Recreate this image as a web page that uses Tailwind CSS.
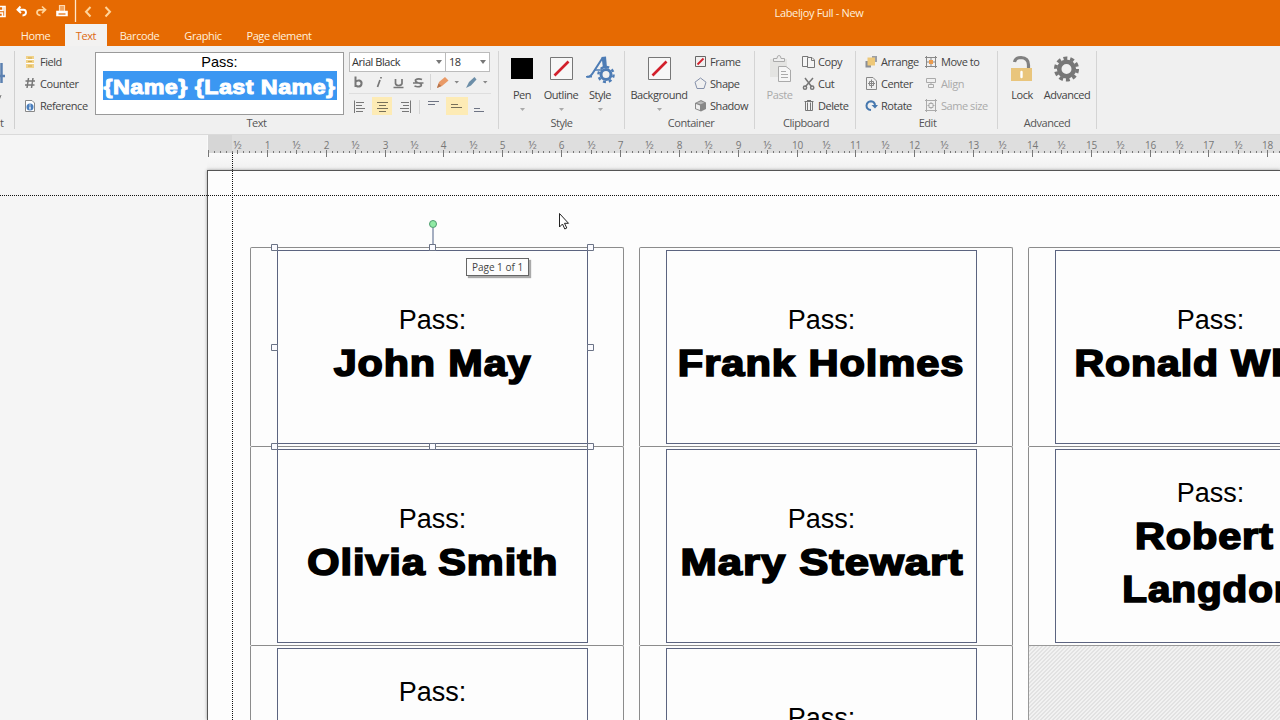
<!DOCTYPE html>
<html lang="en">
<head>
  <meta charset="UTF-8" />
  <title>Labeljoy Full - New</title>
  <script src="https://cdn.jsdelivr.net/npm/@tailwindcss/browser@4"></script>
</head>
<body class="w-[1280px] h-[720px] overflow-hidden bg-[#f5f5f5] text-[#444] text-[11px] leading-none tracking-[-0.15px] font-['Open_Sans',sans-serif] flex flex-col cursor-default">

  <!-- Title bar -->
  <header class="h-[24px] shrink-0 bg-[#e66a02] flex items-center text-white">
    <svg class="w-[120px] h-[24px] shrink-0" viewBox="0 0 120 24" fill="none" stroke="#fff" stroke-width="1.6">
      <path d="M-6 6.5H5V16.500H-4M-2 6.500V10.500H3V6.500M-1 16V13H2.500V16" />
      <path d="M20.500 6.500L17.500 9.800L21 13M18 9.800H23.500Q26 10 26 12.500Q26 15.200 22.500 15.500" stroke-width="1.900" />
      <path d="M42 6.500L45.500 9.800L42 13M45 9.800H40Q37 10 37 12.500Q37 15 40.500 15.500" stroke="#ffd49a" stroke-width="1.700" />
      <path d="M59.500 11V5.500H64.500V11" fill="#f3a45f" stroke="#ffd9b0" stroke-width="1.200" />
      <path d="M57 11.500H67V15.500H57Z" fill="#fff" />
      <path d="M58.500 14H65.500" stroke="#e66a02" stroke-width="1.200" />
      <path d="M75.500 0V22" stroke="#ffe6cc" stroke-width="1.300" />
      <path d="M90.500 7L86 11.700L90.500 16.500M105.500 7L110 11.700L105.500 16.500" stroke="#ffd49a" stroke-width="2" />
    </svg>
    <div class="flex-1 pl-[238px] text-center text-[#fff0dd] tracking-[-0.35px]">Labeljoy Full - New</div>
  </header>

  <!-- Tabs -->
  <nav class="h-[22px] shrink-0 bg-[#e66a02] text-[#fff0dd] tracking-[-0.4px] flex pl-[6px]">
    <div class="w-[59px] flex items-center justify-center pt-[1px]">Home</div>
    <div class="w-[42px] flex items-center justify-center pt-[1px] bg-[#f3f2f1] text-[#de6a14]">Text</div>
    <div class="w-[65px] flex items-center justify-center pt-[1px]">Barcode</div>
    <div class="w-[62px] flex items-center justify-center pt-[1px]">Graphic</div>
    <div class="w-[90px] flex items-center justify-center pt-[1px]">Page element</div>
  </nav>

  <!-- Ribbon -->
  <section class="h-[89px] shrink-0 bg-[#f0f0f0] border-b border-[#dadada] tracking-[-0.45px] [&_span]:pb-[2px] flex pt-[5px] pb-[5px]">

    <div class="w-[15px] shrink-0 border-r border-[#d0d0d0] flex flex-col">
      <svg class="w-[14px] h-[66px]" viewBox="0 0 14 66" fill="none" stroke="#5b80b0"><path d="M1.500 12V32M0 25H5" stroke-width="2.500" /><path d="M-2 52L1 44" stroke="#777" /></svg>
      <div class="text-[#555]">t</div>
    </div>

    <!-- Text group -->
    <div class="w-[484px] shrink-0 border-r border-[#d4d4d4] flex flex-col">
      <div class="h-[66px] flex">
        <div class="w-[80px] flex flex-col pl-[9px]">
          <div class="h-[22px] flex items-center gap-[4px]">
            <svg class="w-[12px] h-[14px]" viewBox="0 0 12 14"><path d="M2 1H10V13H2Z" fill="#f1d289" /><path d="M2 4.500H10M2 8.500H10" stroke="#fff" /><path d="M4 3H8M4 6.500H8M4 11H8" stroke="#d0a94e" /></svg>
            <span>Field</span>
          </div>
          <div class="h-[22px] flex items-center gap-[4px]">
            <svg class="w-[12px] h-[14px]" viewBox="0 0 12 14" stroke="#777" stroke-width="1.500"><path d="M4.500 1L3 11M9 1L7.500 11M1.500 4H11M1 8H10.500" /></svg>
            <span>Counter</span>
          </div>
          <div class="h-[22px] flex items-center gap-[4px]">
            <svg class="w-[12px] h-[14px]" viewBox="0 0 12 14"><path d="M1.500 1.500H8L10.500 4V12.500H1.500Z" fill="#fff" stroke="#888" /><circle cx="6" cy="8" r="3.500" fill="#4a7ebc" /><path d="M6 5.500V6.500M6 7.500V10.500" stroke="#fff" stroke-width="1.300" /></svg>
            <span>Reference</span>
          </div>
        </div>

        <!-- Editor preview -->
        <div class="w-[249px] h-[63px] mt-[1px] bg-white border border-[#9a9a9a] text-center tracking-normal font-['Liberation_Sans',sans-serif]">
          <div class="h-[18px] leading-[19px] text-[14.5px] text-black">Pass:</div>
          <div class="mx-auto w-[234px] h-[29px] bg-[#3b97f2] text-white whitespace-nowrap leading-[31px] text-[21px] font-bold tracking-[0.4px] [-webkit-text-stroke:1px_#fff] flex justify-center"><div class="scale-x-[1.11]">{Name} {Last Name}</div></div>
        </div>

        <div class="w-[150px] pl-[5px] pt-[1px]">
          <div class="flex h-[20px] text-[#333]">
            <div class="w-[97px] border border-[#bbb] bg-white flex items-center justify-between pl-[2px] pr-[3px]"><span>Arial Black</span>
              <svg class="w-[6px] h-[4px]" viewBox="0 0 6 4"><path d="M0 0H6L3 4Z" fill="#777" /></svg>
            </div>
            <div class="w-[44px] border border-l-0 border-[#bbb] bg-white flex items-center justify-between pl-[3px] pr-[3px]"><span>18</span>
              <svg class="w-[6px] h-[4px]" viewBox="0 0 6 4"><path d="M0 0H6L3 4Z" fill="#777" /></svg>
            </div>
          </div>
          <svg class="w-[144px] h-[44px]" viewBox="0 0 144 44" fill="none" stroke="#777" stroke-width="1.600">
            <path d="M6.500 4.500V15M6.500 10Q8 8 10.500 8.500Q13 9.500 12.500 12Q12 15 8.500 14.500L6.500 13.500" stroke-width="2" />
            <path d="M31 8L28.500 15M32 5V6.500" stroke-width="1.700" />
            <path d="M46.500 7V11.500Q47 13.500 49.500 13.500Q52.500 13.500 53 11.500V7M44.500 15.500H54.500" stroke-width="1.700" />
            <path d="M73 7.500Q69 6 66.500 8Q66 10 69.500 11Q73.500 12 72 14Q69 15.500 65.500 14M64 11H74.500" stroke-width="1.700" />
            <path d="M81.500 2V18M70.500 28V42" stroke="#d5d5d5" stroke-width="1" />
            <path d="M0 21.500H142" stroke="#dedede" stroke-width="1" />
            <path d="M88 16L90 10L96 5L99.500 8.500L93 14Z" fill="#e99a67" stroke="none" />
            <path d="M88 16L89.500 11.500L92.500 14Z" fill="#b5744c" stroke="none" />
            <path d="M117 16L120 10L125.500 5L127.500 7.500L122 13.500Z" fill="#6c8ea8" stroke="none" />
            <path d="M105.500 9H110L107.700 11.500ZM134 9H138.500L136.200 11.500Z" fill="#888" stroke="none" />
            <path d="M23 25H43V43H23ZM97 25H119V43H97Z" fill="#fdebb5" stroke="none" />
            <path d="M5.500 28.500V41M7 30.500H15M7 33.500H13M7 36.500H16M7 39.500H14" stroke="#777" stroke-width="1" />
            <path d="M28 30.500H39M30 33.500H37M28 36.500H39M30 39.500H37" stroke="#77705a" stroke-width="1" />
            <path d="M61.500 28.500V41M52 30.500H60M54 33.500H60M51 36.500H60M53 39.500H60" stroke="#777" stroke-width="1" />
            <path d="M79 29.500H90M79 32.500H86" stroke="#6e7484" stroke-width="1" />
            <path d="M102 32.500H109M102 35.500H113" stroke="#77705a" stroke-width="1" />
            <path d="M125 36.500H131M125 39.500H135" stroke="#6e7484" stroke-width="1" />
          </svg>
        </div>
      </div>
      <div class="text-center text-[#555]">Text</div>
    </div>

    <!-- Style group -->
    <div class="w-[126px] shrink-0 border-r border-[#d4d4d4] flex flex-col">
      <div class="h-[66px] flex pl-[3px]">
        <div class="w-[40px] flex flex-col items-center pt-[3px]">
          <svg class="w-[30px] h-[30px]" viewBox="0 0 30 30"><path d="M4 4H26V25H4Z" fill="#000" /></svg>
          <div class="h-[22px] flex items-center pb-[2px]">Pen</div>
          <svg class="w-[5px] h-[3px] mt-[2px]" viewBox="0 0 5 3"><path d="M0 0H5L2.500 3Z" fill="#aaa" /></svg>
        </div>
        <div class="w-[38px] flex flex-col items-center pt-[3px]">
          <svg class="w-[30px] h-[30px]" viewBox="0 0 30 30"><path d="M4.500 3.500H26.500V25.500H4.500Z" fill="#f7f7f7" stroke="#777" /><path d="M8.500 21.500L22.500 7.500" stroke="#d2202c" stroke-width="2.600" /></svg>
          <div class="h-[22px] flex items-center pb-[2px]">Outline</div>
          <svg class="w-[5px] h-[3px] mt-[2px]" viewBox="0 0 5 3"><path d="M0 0H5L2.500 3Z" fill="#aaa" /></svg>
        </div>
        <div class="w-[40px] flex flex-col items-center pt-[3px]">
          <svg class="w-[30px] h-[30px]" viewBox="0 0 30 30" fill="none" stroke="#4d7cb5">
            <path d="M2 22.500Q5 23.500 7.500 19.500L17.500 4" stroke-width="2" />
            <path d="M16.500 3L21 2.500L22 14H18Z" fill="#4d7cb5" stroke="none" />
            <path d="M9.500 16H17M1 22.800H7" stroke-width="1.600" />
            <circle cx="21" cy="20.500" r="7.600" stroke-width="2.400" stroke-dasharray="3 2.969" />
            <circle cx="21" cy="20.500" r="5" stroke-width="3" fill="#f0f0f0" />
          </svg>
          <div class="h-[22px] flex items-center pb-[2px]">Style</div>
          <svg class="w-[5px] h-[3px] mt-[2px]" viewBox="0 0 5 3"><path d="M0 0H5L2.500 3Z" fill="#aaa" /></svg>
        </div>
      </div>
      <div class="text-center text-[#555]">Style</div>
    </div>

    <!-- Container group -->
    <div class="w-[130px] shrink-0 border-r border-[#d4d4d4] flex flex-col">
      <div class="h-[66px] flex">
        <div class="w-[68px] flex flex-col items-center pt-[3px]">
          <svg class="w-[30px] h-[30px]" viewBox="0 0 30 30"><path d="M4.500 3.500H26.500V25.500H4.500Z" fill="#f7f7f7" stroke="#777" /><path d="M8.500 21.500L22.500 7.500" stroke="#d2202c" stroke-width="2.600" /></svg>
          <div class="h-[22px] flex items-center pb-[2px]">Background</div>
          <svg class="w-[5px] h-[3px] mt-[2px]" viewBox="0 0 5 3"><path d="M0 0H5L2.500 3Z" fill="#aaa" /></svg>
        </div>
        <div class="flex flex-col">
          <div class="h-[22px] flex items-center gap-[3px]">
            <svg class="w-[14px] h-[14px]" viewBox="0 0 14 14" fill="none"><path d="M2.500 1.500H12.500V11.500H2.500Z" stroke="#666" /><path d="M4.500 9.500L10.500 3.500" stroke="#d2202c" stroke-width="1.800" /></svg>
            <span>Frame</span>
          </div>
          <div class="h-[22px] flex items-center gap-[3px]">
            <svg class="w-[14px] h-[14px]" viewBox="0 0 14 14" fill="none"><path d="M7.500 1L13 5.200L11 11.500H4L2 5.200Z" stroke="#8490aa" /></svg>
            <span>Shape</span>
          </div>
          <div class="h-[22px] flex items-center gap-[3px]">
            <svg class="w-[14px] h-[14px]" viewBox="0 0 14 14"><path d="M2 4L8 1L13 3.500V10L8 12.500L2 10Z" fill="#888" /><path d="M3 5L7 6.500V11L3 9.500Z" fill="#eee" /><path d="M3.500 4L8 2.200L11.500 3.700L7.500 5.300Z" fill="#bbb" /></svg>
            <span>Shadow</span>
          </div>
        </div>
      </div>
      <div class="text-center pl-[3px] text-[#555]">Container</div>
    </div>

    <!-- Clipboard group -->
    <div class="w-[101px] shrink-0 border-r border-[#d4d4d4] flex flex-col">
      <div class="h-[66px] flex">
        <div class="w-[46px] flex flex-col items-center pt-[3px] pl-[3px] text-[#aaa]">
          <svg class="w-[30px] h-[30px]" viewBox="0 0 30 30" fill="none"><path d="M5 5H22V23H5Z" fill="#e4e4e2" /><path d="M8.500 4.500H12Q12 1.500 14 1.500Q16 1.500 16 4.500H19.500V7.500H8.500Z" fill="#eee" stroke="#aaa" /><path d="M13.500 12.500H21L25.500 16V27.500H13.500Z" fill="#f6f6f6" stroke="#aaa" /><path d="M16 17.500H21M16 20.500H23M16 23.500H23" stroke="#aaa" /></svg>
          <div class="h-[22px] flex items-center pb-[2px]">Paste</div>
        </div>
        <div class="flex flex-col">
          <div class="h-[22px] flex items-center gap-[3px]">
            <svg class="w-[14px] h-[14px]" viewBox="0 0 14 14" fill="#f5f5f5" stroke="#777"><path d="M1.500 1.500H7L8.500 3.500V11.500H1.500Z" /><path d="M6.500 2.500H11L13.500 5V12.500H6.500Z" /><path d="M10.500 3V5.500H13" /></svg>
            <span>Copy</span>
          </div>
          <div class="h-[22px] flex items-center gap-[3px]">
            <svg class="w-[14px] h-[14px]" viewBox="0 0 14 14" fill="none" stroke="#777" stroke-width="1.500"><path d="M4 1L10.500 9.500M12 1L4.500 9.500" /><circle cx="4" cy="10.700" r="1.600" /><circle cx="11.200" cy="10.700" r="1.600" /></svg>
            <span>Cut</span>
          </div>
          <div class="h-[22px] flex items-center gap-[3px]">
            <svg class="w-[14px] h-[14px]" viewBox="0 0 14 14" fill="none" stroke="#777"><path d="M4.500 3V11.500H11.500V3M3.500 2.500H12.500M6.500 3.500V11M9.500 3.500V11M6 1.500H10" /></svg>
            <span>Delete</span>
          </div>
        </div>
      </div>
      <div class="text-center pl-[2px] text-[#555]">Clipboard</div>
    </div>

    <!-- Edit group -->
    <div class="w-[142px] shrink-0 border-r border-[#d4d4d4] flex flex-col">
      <div class="h-[66px] flex pl-[8px]">
        <div class="w-[60px] flex flex-col">
          <div class="h-[22px] flex items-center gap-[3px]">
            <svg class="w-[14px] h-[14px]" viewBox="0 0 14 14"><path d="M1.500 6H7V12.500H1.500Z" fill="#8b8f96" /><path d="M8 1H13V7H8Z" fill="#9b9fa6" /><path d="M3.500 2.500H11V10.500H3.500Z" fill="#eec878" /></svg>
            <span>Arrange</span>
          </div>
          <div class="h-[22px] flex items-center gap-[3px]">
            <svg class="w-[14px] h-[14px]" viewBox="0 0 14 14" fill="none" stroke="#888"><path d="M2.500 0.500H9L12.500 4V12.500H2.500Z" /><path d="M5.500 4.500H9.500V8.500H5.500ZM7.500 2.500V11M4 6.500H11" /></svg>
            <span>Center</span>
          </div>
          <div class="h-[22px] flex items-center gap-[3px]">
            <svg class="w-[14px] h-[14px]" viewBox="0 0 14 14" fill="none"><path d="M7 11Q2.500 10.500 2.500 6.500Q3 2.500 7 2.200Q10.800 2.500 11 6.500" stroke="#4577ae" stroke-width="2" /><path d="M7.500 6H14L11 9.500Z" fill="#4577ae" /></svg>
            <span>Rotate</span>
          </div>
        </div>
        <div class="flex flex-col">
          <div class="h-[22px] flex items-center gap-[3px]">
            <svg class="w-[14px] h-[14px]" viewBox="0 0 14 14" fill="none" stroke="#888"><path d="M1 2.500H13M1 11.500H13M2.500 1V13M11.500 1V13M2 7H12M7 2V12" /><path d="M5 5H9V9H5Z" fill="#eb9b4e" stroke="none" /></svg>
            <span>Move to</span>
          </div>
          <div class="h-[22px] flex items-center gap-[3px] text-[#aaa]">
            <svg class="w-[14px] h-[14px]" viewBox="0 0 14 14" fill="none" stroke="#aaa"><path d="M2.500 1.500H11.500V5.500H2.500ZM4.500 7.500H9.500V10.500H4.500ZM7 5.500V7.500" /></svg>
            <span>Align</span>
          </div>
          <div class="h-[22px] flex items-center gap-[3px] text-[#aaa]">
            <svg class="w-[14px] h-[14px]" viewBox="0 0 14 14" fill="none" stroke="#aaa"><path d="M1 1.500H13M1 11.500H13M2.500 0V13M11.500 0V13" /><path d="M5 4.500H9V8.500H5ZM7 3V4.500M7 8.500V10M3.500 6.500H5M9 6.500H10.500" /></svg>
            <span>Same size</span>
          </div>
        </div>
      </div>
      <div class="text-center pl-[2px] text-[#555]">Edit</div>
    </div>

    <!-- Advanced group -->
    <div class="w-[99px] shrink-0 border-r border-[#d4d4d4] flex flex-col">
      <div class="h-[66px] flex">
        <div class="w-[48px] flex flex-col items-center pt-[3px]">
          <svg class="w-[30px] h-[30px]" viewBox="0 0 30 30" fill="none"><path d="M7.500 8Q8.500 3.500 14 3.500Q21.500 4 21.500 11V14" stroke="#808080" stroke-width="3.200" /><path d="M4 14H25V27H4Z" fill="#e9c57c" /><path d="M14.500 18V23" stroke="#fff" stroke-width="2.400" stroke-linecap="round" /></svg>
          <div class="h-[22px] flex items-center pb-[2px]">Lock</div>
        </div>
        <div class="w-[42px] flex flex-col items-center pt-[3px]">
          <svg class="w-[30px] h-[30px]" viewBox="0 0 30 30" fill="none" stroke="#777"><circle cx="14.500" cy="15" r="10.800" stroke-width="3.500" stroke-dasharray="3.900 2.886" /><circle cx="14.500" cy="15" r="7.300" stroke-width="4.600" /></svg>
          <div class="h-[22px] flex items-center pb-[2px]">Advanced</div>
        </div>
      </div>
      <div class="text-center text-[#555]">Advanced</div>
    </div>
  </section>

  <!-- Workspace -->
  <main class="relative flex-1 flex flex-col overflow-hidden pl-[207px]">
    <div class="h-[35px] shrink-0 bg-gradient-to-b from-[#fafafa] from-50% to-[#f0f0f0]">
      <svg id="ruler" class="block w-[1073px] h-[23px] font-['Open_Sans',sans-serif]" viewBox="0 0 1073 23">
        <path d="M1 0H1073V18H1Z" fill="#dedede" />
        <path d="M1 0H25V18H1Z" fill="#d6d6d6" />
      </svg>
    </div>

    <!-- Sheet -->
    <div class="flex-1 bg-[#fdfdfd] border-l border-t border-[#555] shadow-[0_0_3px_#999] pl-[42px] pt-[76px] overflow-hidden">
      <div id="sheet" class="grid grid-cols-[374px_374px_374px] auto-rows-[199px] gap-x-[15px]"></div>
    </div>

    <!-- Margin guides -->
    <div class="absolute left-[232px] top-[18px] bottom-0 w-px bg-[repeating-linear-gradient(to_bottom,#111_0_1px,transparent_1px_2px)]"></div>
    <div class="absolute left-0 right-0 top-[60px] h-px bg-[repeating-linear-gradient(to_right,#111_0_1px,transparent_1px_2px)]"></div>

    <!-- Selection frame -->
    <svg class="absolute left-[270px] top-[80px] w-[330px] h-[240px]" viewBox="0 0 330 240" fill="none" stroke="#6b7386">
      <path d="M163 13V29" stroke="#8793ad" stroke-width="1.500" />
      <circle cx="163" cy="9" r="3.500" fill="#90eaa4" stroke="#4f9b70" />
      <g fill="#fbfbff">
        <path d="M1.500 29.500H7.500V35.500H1.500ZM159.500 29.500H165.500V35.500H159.500ZM317.500 29.500H323.500V35.500H317.500Z" />
        <path d="M1.500 129.500H7.500V135.500H1.500ZM317.500 129.500H323.500V135.500H317.500Z" />
        <path d="M1.500 228.500H7.500V234.500H1.500ZM159.500 228.500H165.500V234.500H159.500ZM317.500 228.500H323.500V234.500H317.500Z" />
      </g>
    </svg>

    <div class="absolute left-[466px] top-[123px] w-[63px] h-[18px] bg-[#fdfdfd] border border-[#666] shadow-[2px_2px_1px_#aaa] flex items-center justify-center text-[10px] tracking-normal">Page 1 of 1</div>

    <svg class="absolute left-[558px] top-[77px] w-[12px] h-[19px]" viewBox="0 0 12 19"><path d="M1.500 1.500V15L4.500 12L6.800 17L8.800 16L6.500 11.300H10.500Z" fill="#fff" stroke="#222" /></svg>
  </main>

  <script>
    // each label holds its name lines as [text, horizontal stretch]
    const labels = [
      [["John May", 1.117]], [["Frank Holmes", 1.127]], [["Ronald White", 1.11]],
      [["Olivia Smith", 1.123]], [["Mary Stewart", 1.18]], [["Robert&nbsp;", 1.12], ["Langdon", 1.095]],
      [["&nbsp;", 1], ["&nbsp;", 1]], [["&nbsp;", 1]], null,
    ];

    document.getElementById("sheet").innerHTML = labels.map((lines) => {
      if (!lines) {
        return `<div class="border-x border-t border-[#999] bg-[linear-gradient(135deg,#e2e2e2_25%,#f2f2f2_25%_50%,#e2e2e2_50%_75%,#f2f2f2_75%)] bg-[length:4px_4px]"></div>`;
      }
      return `<div class="border-x border-t border-[#8c8c8c] rounded-t-[2px] pl-[26px] pt-[2px]">
        <div class="w-[311px] h-[194px] border border-[#5c6480] flex flex-col justify-center items-center text-black tracking-normal font-['Liberation_Sans',sans-serif]">
          <div class="text-[27px] leading-[31px]">Pass:</div>
          ${lines.map(([text, stretch]) => `<div style="transform: scaleX(${stretch})" class="pt-[2px] text-[37px] leading-[51px] font-bold tracking-[0.8px] whitespace-nowrap [-webkit-text-stroke:1.7px_#000]">${text}</div>`).join("")}
        </div>
      </div>`;
    }).join("");

    // one tick per millimetre, labels on every half centimetre
    const mm = 5.885;
    let marks = "";
    for (let i = 0; i * mm < 1073; i++) {
      const x = Math.round(1 + i * mm) + 0.5;
      const top = i % 5 ? 16 : 15;
      const end = i % 5 ? 18 : i % 10 ? 19 : 22;
      marks += `<path d="M${x} ${top}V${end}" stroke="#777" />`;
      if (i && i % 5 === 0) {
        marks += `<text x="${x}" y="13.5" text-anchor="middle" font-size="${i % 10 ? 11 : 10}" fill="#777">${i % 10 ? "½" : i / 10}</text>`;
      }
    }
    document.getElementById("ruler").innerHTML += marks;
  </script>
</body>
</html>
